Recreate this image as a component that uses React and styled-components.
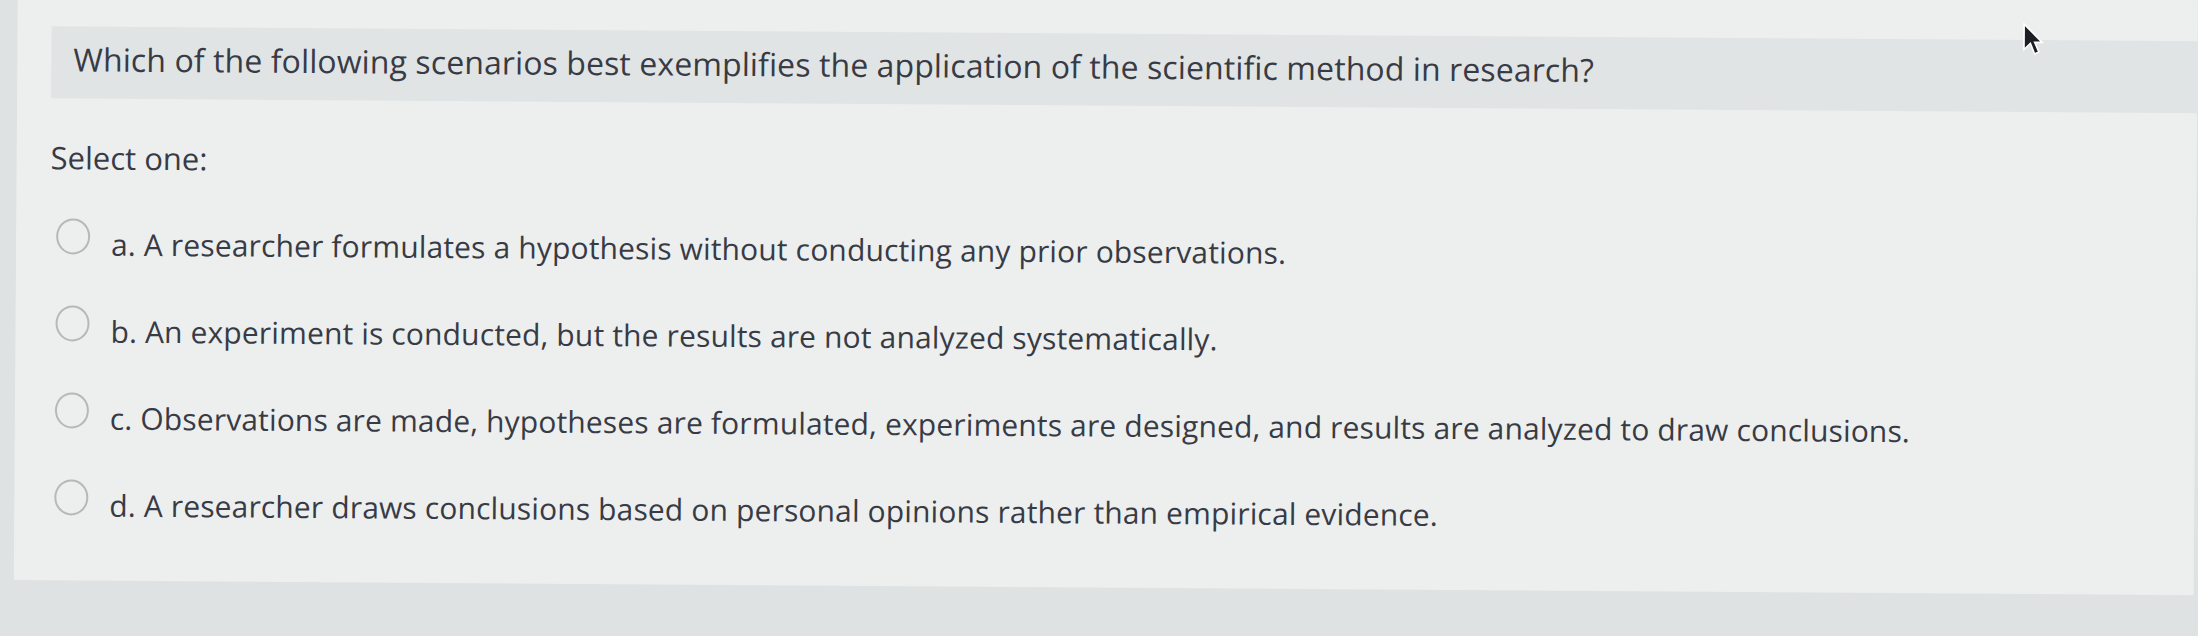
import styled, { createGlobalStyle } from "styled-components"

const GlobalStyle = createGlobalStyle`
    html, body {
        margin: 0;
        padding: 0;
        background: #dcdfdf;
        font-family: "Open Sans", "Noto Sans", sans-serif;
        overflow: hidden;
    }
`

const Page = styled("div")`
    width: 2198px;
    height: 636px;
    padding-left: 18px;
    box-sizing: border-box;
    background: #dfe2e2;
    overflow: hidden;
`

const Card = styled("div")`
    background: #edefee;
    margin-top: -30px;
    height: 610px;
    padding-top: 56px;
    box-sizing: border-box;
    transform: rotate(0.4deg);
    transform-origin: left top;
    position: relative;
`

const QuestionBar = styled("div")`
    margin-left: 34px;
    margin-right: -60px;
    height: 72px;
    background: #e1e4e4;
    display: flex;
    align-items: center;
    padding: 0 0 8px 22px;
    box-sizing: border-box;
    color: #383b45;
    font-size: 32px;
    letter-spacing: 0.1px;
`

const Prompt = styled("div")`
    margin: 38px 0 0 34px;
    color: #383b45;
    font-size: 31px;
`

const Options = styled("div")`
    display: flex;
    flex-direction: column;
    gap: 43px;
    margin: 44px 0 0 40px;
`

const Option = styled("label")`
    display: flex;
    align-items: center;
    gap: 21px;
    color: #383b45;
    font-size: 30px;
    letter-spacing: 0.15px;
    line-height: 44px;
`

const Radio = styled("span")`
    width: 34px;
    height: 36px;
    flex: none;
    border-radius: 50%;
    border: 2px solid #b6b8ba;
    box-sizing: border-box;
    margin-top: -16px;
`

const Cursor = styled("svg")`
    position: absolute;
    left: 2004px;
    top: 38px;
`

const options = [
    "a. A researcher formulates a hypothesis without conducting any prior observations.",
    "b. An experiment is conducted, but the results are not analyzed systematically.",
    "c. Observations are made, hypotheses are formulated, experiments are designed, and results are analyzed to draw conclusions.",
    "d. A researcher draws conclusions based on personal opinions rather than empirical evidence.",
]

const App = () => {
    return (
        <Page>
            <GlobalStyle/>
            <Card>
                <QuestionBar>
                    Which of the following scenarios best exemplifies the application of the scientific method in research?
                </QuestionBar>
                <Prompt>Select one:</Prompt>
                <Options>
                    {options.map(text => (
                        <Option key={text}>
                            <Radio/>
                            {text}
                        </Option>
                    ))}
                </Options>
                <Cursor width="22" height="34" viewBox="0 0 20 32">
                    <path d="M2 2 L2 26 L8 20 L12 30 L16 28 L12 19 L19 19 Z" fill="#1d1f24" stroke="#ffffff" strokeWidth="1.5"/>
                </Cursor>
            </Card>
        </Page>
    )
}

export default App
